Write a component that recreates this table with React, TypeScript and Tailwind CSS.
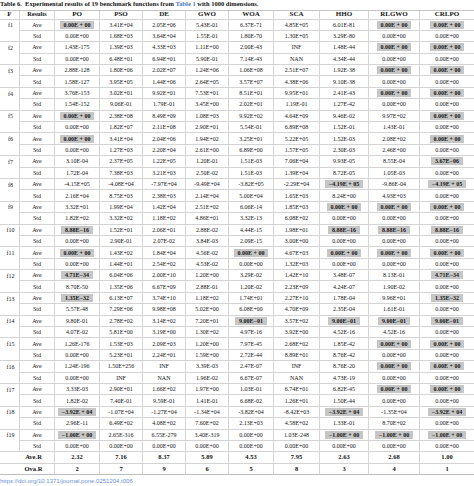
import { Fragment } from "react";

// * = best value (bold on grey)
const Z = "*0.00E + 00";
const S0 = "0.00E+00";

const fns: [string, string[], string[]][] = [
  ["f1", [Z, "3.41E+04", "2.05E+06", "5.43E-01", "6.37E-71", "4.85E+05", "6.01E-81", Z, Z], [S0, "1.68E+03", "3.64E+04", "1.55E-01", "1.80E-70", "1.30E+05", "3.29E-80", S0, S0]],
  ["f2", ["1.43E-175", "1.39E+03", "4.33E+03", "1.11E+00", "2.00E-43", "INF", "1.48E-44", Z, Z], [S0, "6.48E+01", "6.94E+01", "5.90E-01", "7.14E-43", "NAN", "4.34E-44", S0, S0]],
  ["f3", ["2.88E-128", "1.80E+06", "2.02E+07", "1.24E+06", "1.06E+08", "2.51E+07", "1.92E-38", Z, Z], ["1.58E-127", "3.95E+05", "1.44E+06", "2.64E+05", "3.57E+07", "4.38E+06", "9.10E-38", S0, S0]],
  ["f4", ["3.76E-153", "3.02E+01", "9.92E+01", "7.53E+01", "8.51E+01", "9.95E+01", "2.41E-43", Z, Z], ["1.54E-152", "9.06E-01", "1.79E-01", "3.45E+00", "2.02E+01", "1.19E-01", "1.27E-42", S0, S0]],
  ["f5", [Z, "2.38E+08", "8.49E+09", "1.08E+03", "9.92E+02", "4.64E+09", "9.46E-02", "9.97E+02", Z], [S0, "1.82E+07", "2.11E+08", "2.90E+01", "5.54E-01", "6.89E+08", "1.52E-01", "1.43E-01", S0]],
  ["f6", [Z, "3.41E+04", "2.04E+06", "1.94E+02", "3.25E+01", "5.22E+05", "1.52E-03", "2.08E+02", Z], [S0, "1.27E+03", "2.20E+04", "2.61E+00", "6.89E+00", "1.57E+05", "2.30E-03", "2.46E+00", S0]],
  ["f7", ["3.10E-04", "2.37E+05", "1.22E+05", "1.20E-01", "1.51E-03", "7.06E+04", "9.93E-05", "8.55E-04", "*3.67E\u221206"], ["1.72E-04", "7.38E+03", "3.21E+03", "2.50E-02", "1.51E-03", "1.39E+04", "8.72E-05", "1.05E-03", S0]],
  ["f8", ["-4.15E+05", "-4.08E+04", "-7.97E+04", "-9.49E+04", "-3.82E+05", "-2.29E+04", "*\u22124.19E + 05", "-9.86E-04", "*\u22124.19E + 05"], ["2.16E+04", "8.75E+03", "2.38E+03", "2.14E+04", "5.00E+04", "1.65E+03", "8.24E+00", "4.93E+03", S0]],
  ["f9", ["3.32E+01", "1.99E+04", "1.42E+04", "2.51E+02", "6.06E-14", "1.85E+03", Z, Z, Z], ["1.82E+02", "3.32E+02", "1.18E+02", "4.86E+01", "3.32E-13", "6.08E+02", S0, S0, S0]],
  ["f10", ["*8.88E\u221216", "1.52E+01", "2.06E+01", "2.88E-02", "4.44E-15", "1.98E+01", "*8.88E\u221216", "*8.88E\u221216", "*8.88E\u221216"], [S0, "2.90E-01", "2.07E-02", "3.84E-03", "2.09E-15", "3.00E+00", S0, S0, S0]],
  ["f11", [Z, "1.43E+02", "1.84E+04", "4.56E-02", Z, "4.67E+03", Z, Z, Z], [S0, "1.44E+01", "2.54E+02", "4.53E-02", S0, "1.32E+03", S0, S0, S0]],
  ["f12", ["*4.71E\u221234", "6.04E+06", "2.00E+10", "1.20E+00", "3.29E-02", "1.42E+10", "3.48E-07", "8.13E-01", "*4.71E\u221234"], ["8.70E-50", "1.35E+06", "6.67E+09", "2.88E-01", "1.20E-02", "2.23E+09", "4.24E-07", "1.90E-02", S0]],
  ["f13", ["*1.35E\u221232", "6.13E+07", "3.74E+10", "1.18E+02", "1.74E+01", "2.27E+10", "1.78E-04", "9.96E+01", "*1.35E\u221232"], ["5.57E-48", "7.29E+06", "9.98E+08", "5.02E+00", "6.08E+00", "4.70E+09", "2.35E-04", "1.61E-01", S0]],
  ["f14", ["9.80E-01", "2.78E+02", "3.14E+02", "7.20E+01", "*9.00E\u221201", "3.57E+02", "*9.00E\u221201", "*9.00E\u221201", "*9.00E\u221201"], ["4.07E-02", "5.81E+00", "3.19E+00", "1.30E+02", "4.97E-16", "3.92E+00", "4.52E-16", "4.52E-16", S0]],
  ["f15", ["1.26E-176", "1.53E+03", "2.09E+03", "1.20E+00", "7.97E-45", "2.68E+02", "1.85E-42", Z, Z], [S0, "5.23E+01", "2.24E+01", "1.59E+00", "2.72E-44", "8.89E+01", "8.76E-42", S0, S0]],
  ["f16", ["1.24E-196", "1.50E+256", "INF", "3.39E-03", "2.47E-07", "INF", "8.76E-20", Z, Z], [S0, "INF", "NAN", "1.96E-02", "6.67E-07", "NAN", "4.73E-19", S0, S0]],
  ["f17", ["3.33E-03", "2.90E+01", "1.66E+02", "1.97E+00", "1.03E-01", "6.74E+01", "6.82E-45", Z, Z], ["1.82E-02", "7.40E-01", "9.59E-01", "1.41E-01", "6.68E-02", "1.26E+01", "1.50E-44", S0, S0]],
  ["f18", ["*\u22123.92E + 04", "-1.07E+04", "-1.27E+04", "-1.34E+04", "-3.82E+04", "-8.42E+03", "*\u22123.92E + 04", "-1.35E+04", "*\u22123.92E + 04"], ["2.96E-11", "6.49E+02", "4.08E+02", "7.60E+02", "2.13E+03", "4.58E+02", "1.33E-01", "8.70E+02", S0]],
  ["f19", ["*\u22121.00E + 00", "2.65E-316", "6.55E-279", "3.40E-319", S0, "1.03E-248", "*\u22121.00E + 00", "*\u22121.00E + 00", "*\u22121.00E + 00"], [S0, S0, S0, S0, S0, S0, S0, S0, S0]],
];

const heads = ["PO", "PSO", "DE", "GWO", "WOA", "SCA", "HHO", "RLGWO", "CRLPO"];
const aveR = ["2.32", "7.16", "8.37", "5.89", "4.53", "7.95", "2.63", "2.68", "1.00"];
const ovaR = ["2", "7", "9", "6", "5", "8", "3", "4", "1"];

const cols = "grid grid-cols-[20px_35px_45px_43px_43px_43px_45px_46px_49px_51px_54px]";
const cell = "flex items-center justify-center border-b border-[#d4d4d4] whitespace-nowrap";

function Val({ v }: { v: string }) {
  if (v.startsWith("*")) {
    return (
      <span className="inline-block h-[8px] bg-[#c6c6c6] px-[4px] font-bold leading-[8px]">
        {v.slice(1)}
      </span>
    );
  }
  return <span>{v}</span>;
}

function Cells({ vals }: { vals: string[] }) {
  return (
    <>
      {vals.map((v, i) => (
        <div key={i} className={`${cell} ${i < vals.length - 1 ? "border-r" : ""}`}>
          <Val v={v} />
        </div>
      ))}
    </>
  );
}

export default function App() {
  return (
    <div className="h-[486px] w-[474px] overflow-hidden bg-white font-['Liberation_Serif',serif] text-[#151515]">
      {/* caption */}
      <div className="h-[9.5px] whitespace-nowrap text-[6.5px] font-bold leading-[8px]">
        Table 6.&nbsp; Experimental results of 19 benchmark functions from{" "}
        <span className="text-[#4a78c4]">Table 1</span> with 1000 dimensions.
      </div>

      {/* header */}
      <div className={`${cols} h-[10px] border-t border-[#c4c4c4] text-[7px] font-bold leading-none`}>
        <div className={`${cell} border-r`}>F</div>
        <div className={`${cell} border-r text-[6.3px]`}>Results</div>
        {heads.map((h, i) => (
          <div key={h} className={`${cell} ${i < heads.length - 1 ? "border-r" : ""}`}>
            {h}
          </div>
        ))}
      </div>

      {/* body */}
      <div className={`${cols} auto-rows-[11.4px] text-[6px] leading-none`}>
        {fns.map(([f, ave, std]) => (
          <Fragment key={f}>
            <div className="row-span-2 border-b border-r border-[#d4d4d4]">
              <div className="flex h-[11.4px] items-center justify-center pl-[2px]">{f}</div>
            </div>
            <div className={`${cell} border-r`}>Ave</div>
            <Cells vals={ave} />
            <div className={`${cell} border-r`}>Std</div>
            <Cells vals={std} />
          </Fragment>
        ))}

        <div className={`${cell} col-span-2 border-r pl-[13px] text-[6.5px] font-bold`}>Ave.R</div>
        {aveR.map((v, i) => (
          <div key={i} className={`${cell} font-bold text-[6.5px] ${i < 8 ? "border-r" : ""}`}>
            {v}
          </div>
        ))}
        <div className={`${cell} col-span-2 border-r border-b-[#bdbdbd] pl-[13px] text-[6.5px] font-bold`}>Ova.R</div>
        {ovaR.map((v, i) => (
          <div key={i} className={`${cell} border-b-[#bdbdbd] font-bold text-[6.5px] ${i < 8 ? "border-r" : ""}`}>
            {v}
          </div>
        ))}
      </div>

      {/* doi */}
      <div className="pt-[2px] font-['Liberation_Sans',sans-serif] text-[6px] leading-[8px] text-[#6a93d6]">
        https://doi.org/10.1371/journal.pone.0251204.t006
      </div>
    </div>
  );
}
